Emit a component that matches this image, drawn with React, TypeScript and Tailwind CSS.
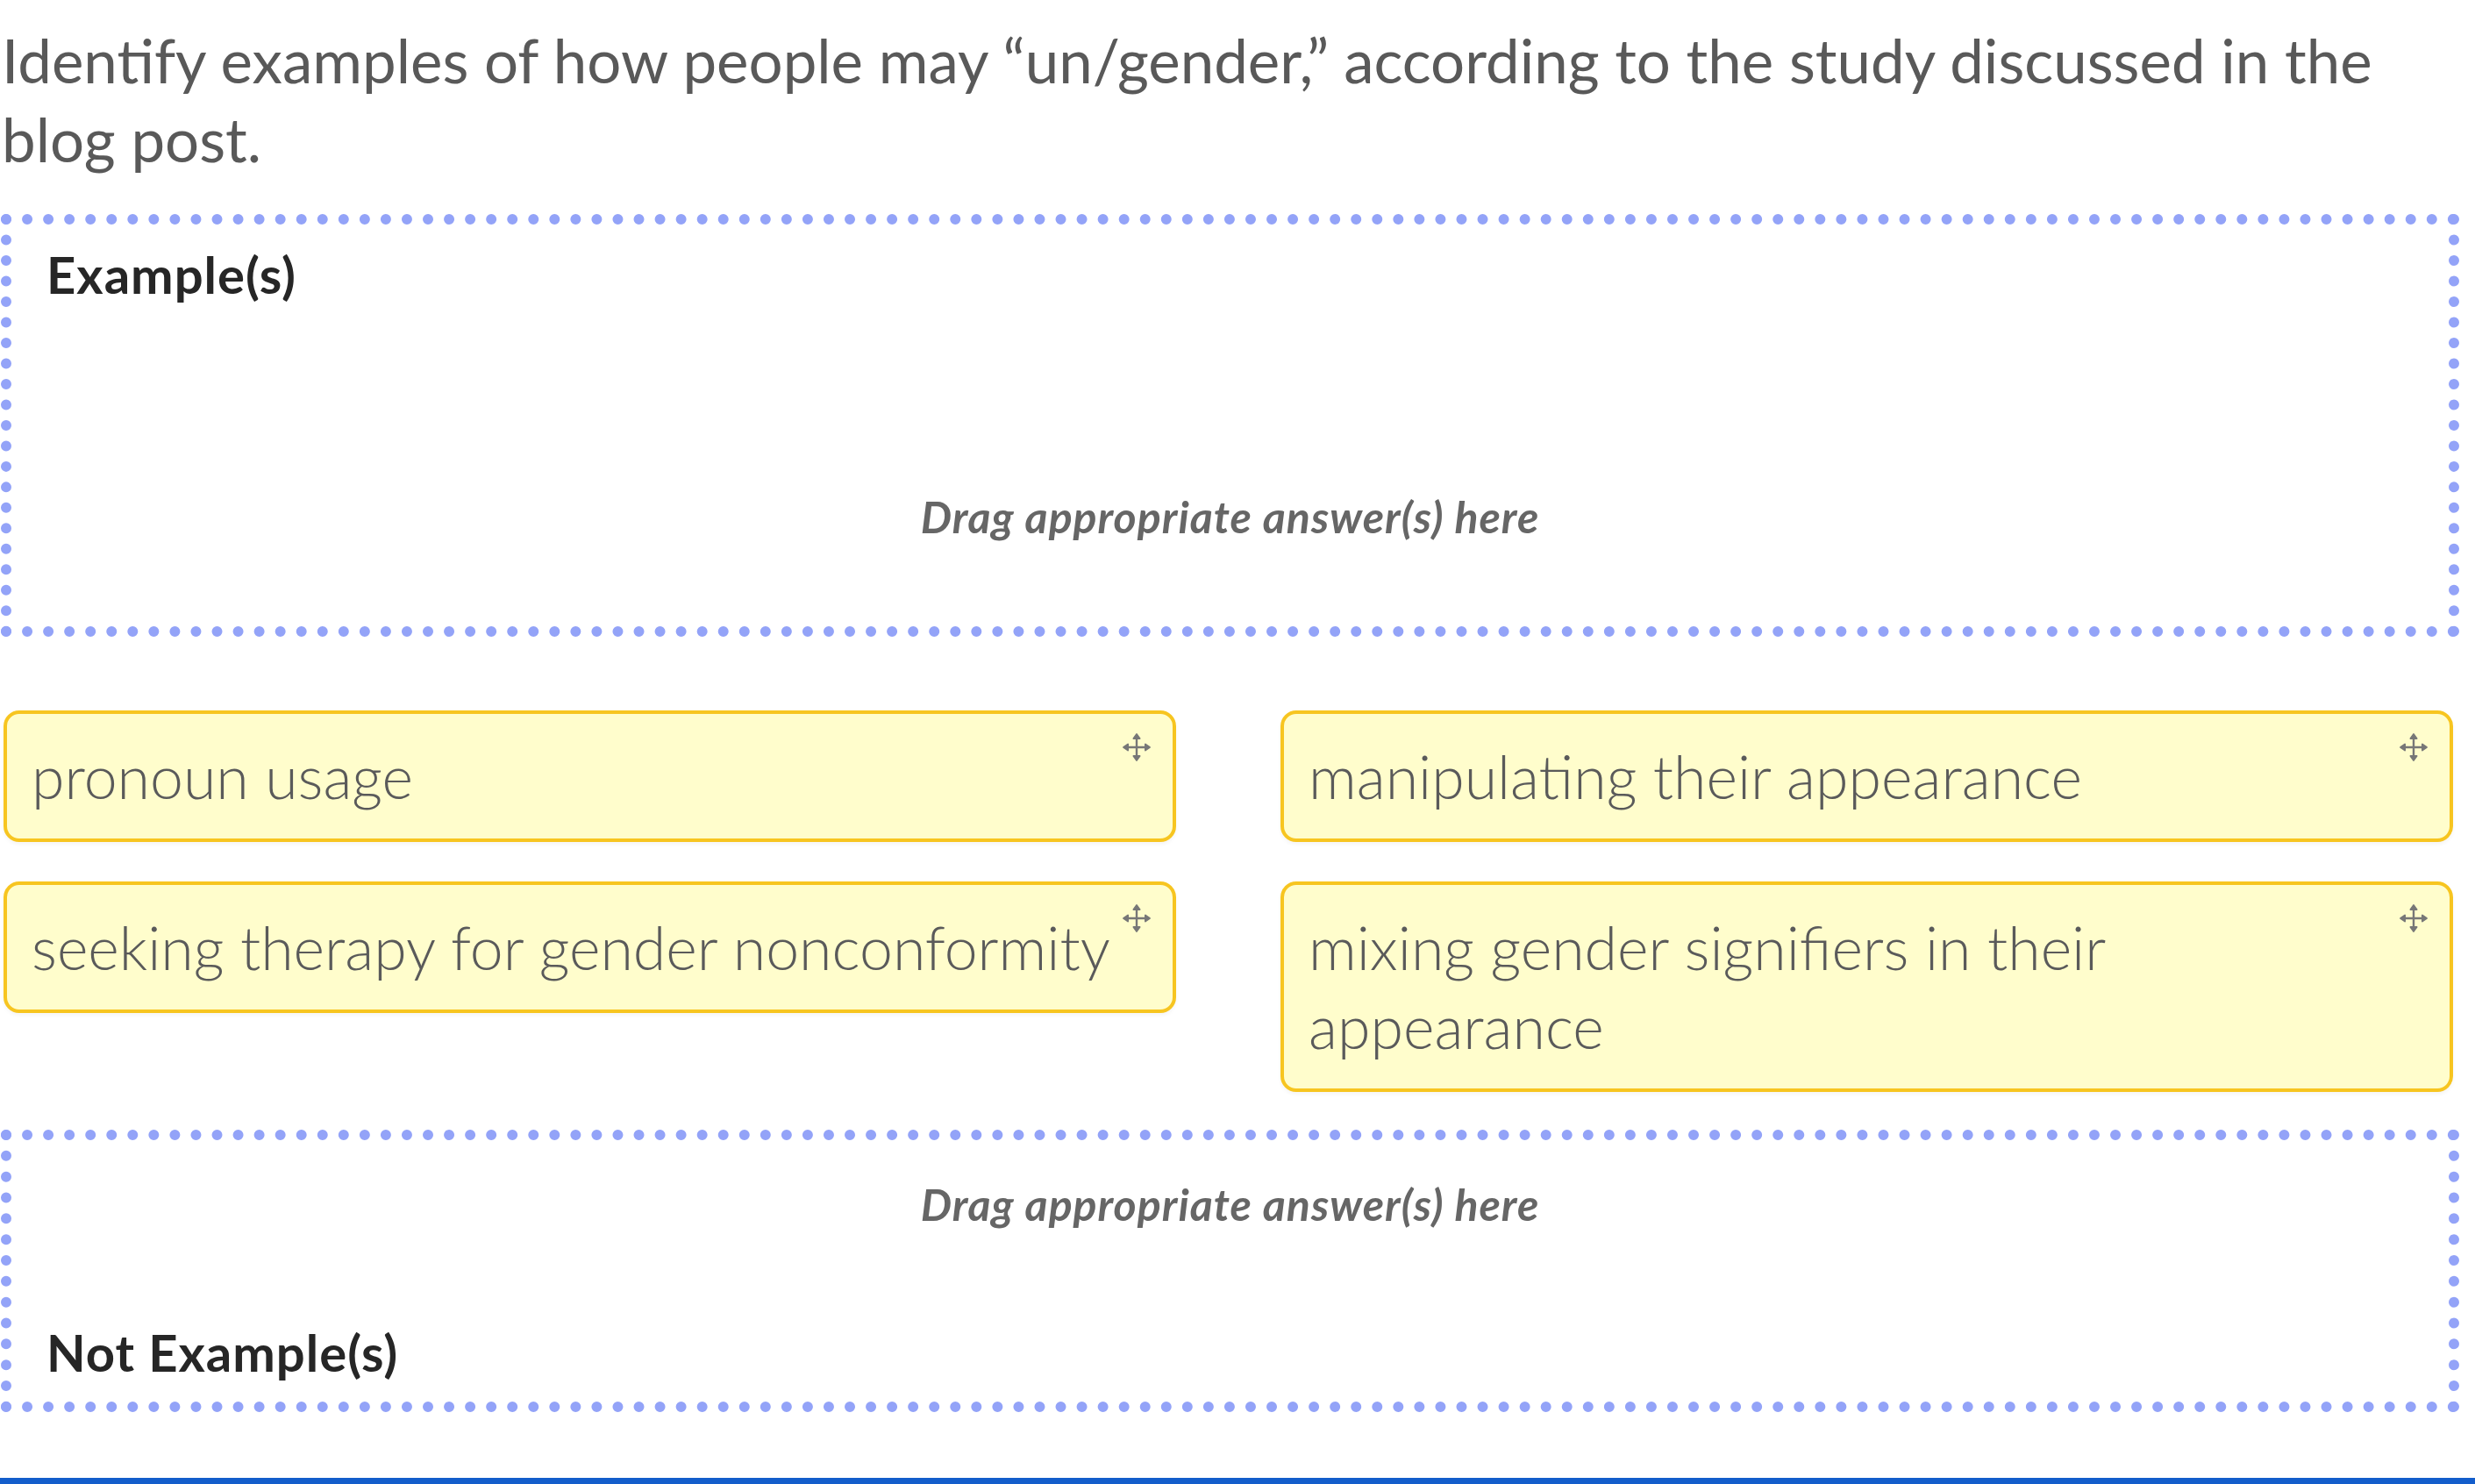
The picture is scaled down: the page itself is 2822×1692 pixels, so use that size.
import React from 'react';

const answers = [
    { id: 1, lines: ["pronoun usage"] },
    { id: 2, lines: ["manipulating their appearance"] },
    { id: 3, lines: ["seeking therapy for gender nonconformity"] },
    { id: 4, lines: ["mixing gender signifiers in their", "appearance"] },
];

const MoveIcon = () => (
    <svg width="36" height="36" viewBox="0 0 24 24" fill="#777" stroke="#777" strokeLinejoin="round">
        <path d="M12 4v16M4 12h16" strokeWidth="1.6" fill="none" />
        <polygon points="12,2 9.6,5.4 14.4,5.4" strokeWidth="1.2" />
        <polygon points="12,22 9.6,18.6 14.4,18.6" strokeWidth="1.2" />
        <polygon points="2,12 5.4,9.6 5.4,14.4" strokeWidth="1.2" />
        <polygon points="22,12 18.6,9.6 18.6,14.4" strokeWidth="1.2" />
    </svg>
);

const AnswerCard = ({ lines }: { lines: string[] }) => (
    <div className="relative rounded-[18px] border-[4px] border-[#f7c520] bg-[#fffdcc] pl-[28px] pr-[60px] py-[26px] shadow-[0_3px_4px_rgba(0,0,0,0.04)]">
        {lines.map((line, i) => (
            <p key={i} className="whitespace-nowrap text-[68px] leading-[90px] font-light text-[#5a5a5a]">{line}</p>
        ))}
        <div className="absolute top-[20px] right-[23px]">
            <MoveIcon />
        </div>
    </div>
);

const DropHint = () => (
    <div className="text-center text-[50px] leading-[56px] tracking-[1px] font-bold italic text-[#666666]">
        Drag appropriate answer(s) here
    </div>
);

export default function App() {
    return (
        <div className="w-[2822px] h-[1692px] bg-white flex flex-col font-['Lato',sans-serif]">
            <div className="flex-1 w-[2803px] ml-[1px]">
                <p className="pt-[24px] pl-[1px] text-[69px] leading-[90px] text-[#595959]">
                    Identify examples of how people may “un/gender,” according to the study discussed in the blog post.
                </p>

                <section className="mt-[40px] h-[482px] border-[12px] border-dotted border-[#93a3f8] flex flex-col">
                    <div className="pl-[40px] pt-[25px] text-[58px] leading-[64px] tracking-[1px] font-bold text-[#262626]">Example(s)</div>
                    <div className="mt-[216px]">
                        <DropHint />
                    </div>
                </section>

                <div className="mt-[84px] pl-[3px] pr-[7px] grid grid-cols-2 gap-x-[119px] gap-y-[45px] items-start">
                    {answers.map((a) => (
                        <AnswerCard key={a.id} lines={a.lines} />
                    ))}
                </div>

                <section className="mt-[43px] h-[322px] border-[12px] border-dotted border-[#93a3f8] flex flex-col justify-between pt-[45px] pb-[24px]">
                    <DropHint />
                    <div className="pl-[40px] text-[58px] leading-[64px] tracking-[1px] font-bold text-[#262626]">Not Example(s)</div>
                </section>
            </div>
            <div className="h-[7px] bg-[#135dcb]" />
        </div>
    );
}
